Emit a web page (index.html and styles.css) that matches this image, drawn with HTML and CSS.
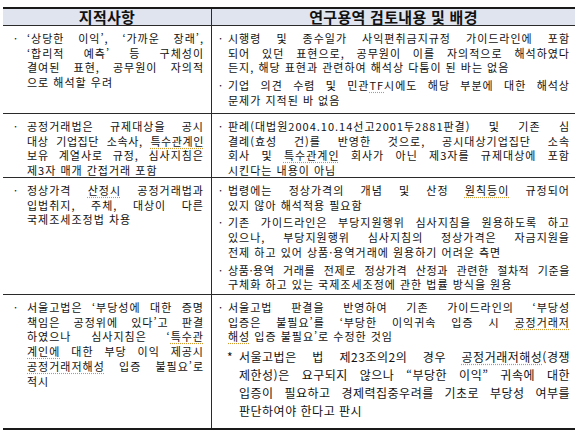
FILE: index.html
```html
<!DOCTYPE html>
<html lang="ko">
<head>
<meta charset="utf-8">
<link rel="stylesheet" href="styles.css">
</head>
<body>
<div class="table">
  <div class="cell head lcol">지적사항</div>
  <div class="cell head rcol">연구용역 검토내용 및 배경</div>

  <div class="cell lcol">
    <div class="item"><span class="dot">·</span><div class="txt">
      <span class="ln">‘상당한 이익’, ‘가까운 장래’,</span>
      <span class="ln">‘합리적 예측’ 등 구체성이</span>
      <span class="ln">결여된 표현, 공무원이 자의적</span>
      <span class="ln end">으로 해석할 우려</span>
    </div></div>
  </div>
  <div class="cell rcol">
    <div class="item"><span class="dot">·</span><div class="txt">
      <span class="ln">시행령 및 종수일가 사익편취금지규정 가이드라인에 포함</span>
      <span class="ln">되어 있던 표현으로, 공무원이 이를 자의적으로 해석하였다</span>
      <span class="ln end">든지, 해당 표현과 관련하여 해석상 다툼이 된 바는 없음</span>
    </div></div>
    <div class="item"><span class="dot">·</span><div class="txt">
      <span class="ln">기업 의견 수렴 및 민관<span class="sp">TF</span>시에도 해당 부분에 대한 해석상</span>
      <span class="ln end">문제가 지적된 바 없음</span>
    </div></div>
  </div>

  <div class="cell lcol">
    <div class="item"><span class="dot">·</span><div class="txt">
      <span class="ln">공정거래법은 규제대상을 공시</span>
      <span class="ln dense">대상 기업집단 소속사, <span class="sp">특수관계인</span></span>
      <span class="ln">보유 계열사로 규정, 심사지침은</span>
      <span class="ln end">제3자 매개 간접거래 포함</span>
    </div></div>
  </div>
  <div class="cell rcol">
    <div class="item"><span class="dot">·</span><div class="txt">
      <span class="ln">판례(대법원2004.10.14선고2001두2881판결) 및 기존 심</span>
      <span class="ln">결례(효성 건)를 반영한 것으로, 공시대상기업집단 소속</span>
      <span class="ln">회사 및 <span class="sp">특수관계인</span> 회사가 아닌 제3자를 규제대상에 포함</span>
      <span class="ln end">시킨다는 내용이 아님</span>
    </div></div>
  </div>

  <div class="cell lcol">
    <div class="item"><span class="dot">·</span><div class="txt">
      <span class="ln">정상가격 <span class="sp">산정시</span> 공정거래법과</span>
      <span class="ln">입법취지, 주체, 대상이 다른</span>
      <span class="ln end">국제조세조정법 차용</span>
    </div></div>
  </div>
  <div class="cell rcol">
    <div class="item"><span class="dot">·</span><div class="txt">
      <span class="ln">법령에는 정상가격의 개념 및 산정 <span class="sp">원칙등이</span> 규정되어</span>
      <span class="ln end">있지 않아 해석적용 필요함</span>
    </div></div>
    <div class="item"><span class="dot">·</span><div class="txt">
      <span class="ln">기존 가이드라인은 부당지원행위 심사지침을 원용하도록 하고</span>
      <span class="ln">있으나, 부당지원행위 심사지침의 정상가격은 자금지원을</span>
      <span class="ln end">전제 하고 있어 상품·용역거래에 원용하기 어려운 측면</span>
    </div></div>
    <div class="item"><span class="dot">·</span><div class="txt">
      <span class="ln dense">상품·용역 거래를 전제로 정상가격 산정과 관련한 절차적 기준을</span>
      <span class="ln end">구체화 하고 있는 국제조세조정에 관한 법률 방식을 원용</span>
    </div></div>
  </div>

  <div class="cell lcol last">
    <div class="item"><span class="dot">·</span><div class="txt">
      <span class="ln">서울고법은 ‘부당성에 대한 증명</span>
      <span class="ln">책임은 공정위에 있다’고 판결</span>
      <span class="ln">하였으나 심사지침은 ‘<span class="sp">특수관</span></span>
      <span class="ln"><span class="sp">계인에</span> 대한 부당 이익 제공시</span>
      <span class="ln"><span class="sp">공정거래저해성</span> 입증 불필요’로</span>
      <span class="ln end">적시</span>
    </div></div>
  </div>
  <div class="cell rcol last">
    <div class="item"><span class="dot">·</span><div class="txt">
      <span class="ln">서울고법 판결을 반영하여 기존 가이드라인의 ‘부당성</span>
      <span class="ln">입증은 불필요’를 ‘부당한 이익귀속 입증 시 <span class="sp">공정거래저</span></span>
      <span class="ln end"><span class="sp">해성</span> 입증 불필요’로 수정한 것임</span>
    </div></div>
    <div class="note"><span class="star">*</span><div class="txt">
      <span class="ln">서울고법은 법 제23조의2의 경우 <span class="sp">공정거래저해성</span>(경쟁</span>
      <span class="ln">제한성)은 요구되지 않으나 “부당한 이익” 귀속에 대한</span>
      <span class="ln">입증이 필요하고 경제력집중우려를 기초로 부당성 여부를</span>
      <span class="ln end">판단하여야 한다고 판시</span>
    </div></div>
  </div>
</div>
</body>
</html>
```

FILE: styles.css
```css
* { box-sizing: border-box; }
body {
  margin: 0;
  background: #ffffff;
  font-family: "Noto Sans CJK KR", sans-serif;
  color: #111111;
}
.table {
  margin: 7px 0 0 3px;
  width: 572px;
  display: grid;
  grid-template-columns: 209px 363px;
  grid-template-rows: 17px 88px 64px 117px 1fr;
  height: 423px;
  border-top: 2px solid #1a1a1a;
  border-bottom: 2px solid #1a1a1a;
}
.cell {
  border-bottom: 1.5px solid #2a2a2a;
  font-size: 11px;
  line-height: 14.7px;
  padding-top: 5px;
  letter-spacing: 1px;
}
.cell.last { border-bottom: none; }
.lcol {
  border-right: 1px solid #2a2a2a;
  padding-left: 8px;
  padding-right: 7px;
}
.rcol {
  padding-left: 7px;
  padding-right: 5px;
}
.head {
  background: #dfe4ee;
  font-size: 15px;
  font-weight: bold;
  line-height: 15px;
  text-align: center;
  padding: 0;
  letter-spacing: 0.3px;
  color: #111;
}
.item { display: flex; margin-bottom: 3px; }
.lcol .dot { width: 16px; flex: none; padding-left: 3px; }
.rcol .dot { width: 9px; flex: none; }
.txt { flex: 1; min-width: 0; }
.ln {
  display: block;
  white-space: nowrap;
  text-align: justify;
  text-align-last: justify;
}
.ln.end { text-align-last: left; }
.ln.dense { letter-spacing: 0.6px; }
.sp {
  text-decoration: underline dotted #d29a2e;
  text-underline-offset: 2px;
}
.note {
  display: flex;
  margin-top: 4px;
  font-size: 12px;
  line-height: 18px;
  letter-spacing: 0.5px;
}
.star { width: 20px; flex: none; padding-left: 8px; }
```
